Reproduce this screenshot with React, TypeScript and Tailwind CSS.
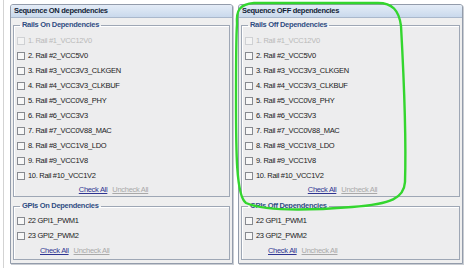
import React from "react";

const rails = [
  "1. Rail #1_VCC12V0",
  "2. Rail #2_VCC5V0",
  "3. Rail #3_VCC3V3_CLKGEN",
  "4. Rail #4_VCC3V3_CLKBUF",
  "5. Rail #5_VCC0V8_PHY",
  "6. Rail #6_VCC3V3",
  "7. Rail #7_VCC0V88_MAC",
  "8. Rail #8_VCC1V8_LDO",
  "9. Rail #9_VCC1V8",
  "10. Rail #10_VCC1V2",
];

const gpis = ["22 GPI1_PWM1", "23 GPI2_PWM2"];

function Box({ disabled }: { disabled?: boolean }) {
  return (
    <span
      className={`block w-[8px] h-[8px] shrink-0 border ${
        disabled ? "border-[#cfd1d4] bg-[#f3f3f3]" : "border-[#878a90] bg-[#f7f7f7]"
      }`}
    />
  );
}

function Row({ label, disabled }: { label: string; disabled?: boolean }) {
  return (
    <div className="flex items-center gap-[3px] h-[15px] pl-[3px]">
      <Box disabled={disabled} />
      <span className={disabled ? "text-[#b9b9b9]" : "text-[#1a1a1a]"}>{label}</span>
    </div>
  );
}

function Links({ centered }: { centered?: boolean }) {
  return (
    <div
      className={`flex items-center gap-[5px] ${
        centered ? "justify-center pr-4 h-[13px]" : "pl-[26px] h-[15px]"
      }`}
    >
      <span className="text-[#2f3592] underline">Check All</span>
      <span className="text-[#a9a9a9] underline">Uncheck All</span>
    </div>
  );
}

function Group({
  legend,
  children,
  className = "",
}: {
  legend: string;
  children: React.ReactNode;
  className?: string;
}) {
  return (
    <fieldset
      className={`border border-[#9ea7b5] mx-[2px] bg-[#ededee] shadow-[inset_1px_1px_0_#ffffff] ${className}`}
    >
      <legend className="ml-[6px] px-[2px] h-[10px] leading-[10px] font-bold text-[#2f4d83]">
        {legend}
      </legend>
      {children}
    </fieldset>
  );
}

function Panel({
  title,
  railsLegend,
  gpiLegend,
  width,
}: {
  title: string;
  railsLegend: string;
  gpiLegend: string;
  width: string;
}) {
  return (
    <div
      className={`${width} h-[260px] flex flex-col border border-[#939cab] rounded-t-[3px] bg-[#efefef] shadow-[1px_1px_0_#c9cdd3]`}
    >
      <div className="h-[13px] flex items-center pl-[3px] bg-gradient-to-b from-[#e4ecf7] to-[#c9d9ec] border-b border-[#a9b8cc] rounded-t-[2px] font-bold text-[#111d36]">
        {title}
      </div>
      <Group legend={railsLegend} className="mt-[2px]">
        <div className="pt-[3px]">
          {rails.map((r, i) => (
            <Row key={r} label={r} disabled={i === 0} />
          ))}
          <Links centered />
        </div>
      </Group>
      <Group legend={gpiLegend} className="mt-[4px]">
        <div className="pt-[2px] pb-[1px]">
          {gpis.map((g) => (
            <Row key={g} label={g} />
          ))}
          <Links />
        </div>
      </Group>
    </div>
  );
}

export default function App() {
  return (
    <div
      className="relative w-[474px] h-[268px] overflow-hidden bg-white text-[7.5px] tracking-[-0.3px] leading-none"
      style={{ fontFamily: '"Liberation Sans", Arial, sans-serif' }}
    >
      <div className="h-full ml-[3px] border-l border-[#d3d3d3] pl-[6px] pt-[4px] flex gap-[5px]">
        <Panel
          title="Sequence ON dependencies"
          railsLegend="Rails On Dependencies"
          gpiLegend="GPIs On Dependencies"
          width="w-[223px]"
        />
        <Panel
          title="Sequence OFF dependencies"
          railsLegend="Rails Off Dependencies"
          gpiLegend="GPIs Off Dependencies"
          width="w-[225px]"
        />
      </div>
      {/* hand-drawn highlight */}
      <svg className="absolute inset-0 pointer-events-none" width="474" height="268">
        <path
          d="M 237 24 C 236 10, 240 4, 254 3 L 378 3 C 392 3, 399 10, 401 26 C 404 80, 406 150, 405 182 C 404 198, 392 204, 352 207 C 302 211, 262 210, 246 203 C 236 196, 236 150, 236 100 C 236 60, 236 38, 237 24"
          fill="none"
          stroke="#33d62e"
          strokeWidth="2.4"
          strokeLinecap="round"
        />
      </svg>
    </div>
  );
}
